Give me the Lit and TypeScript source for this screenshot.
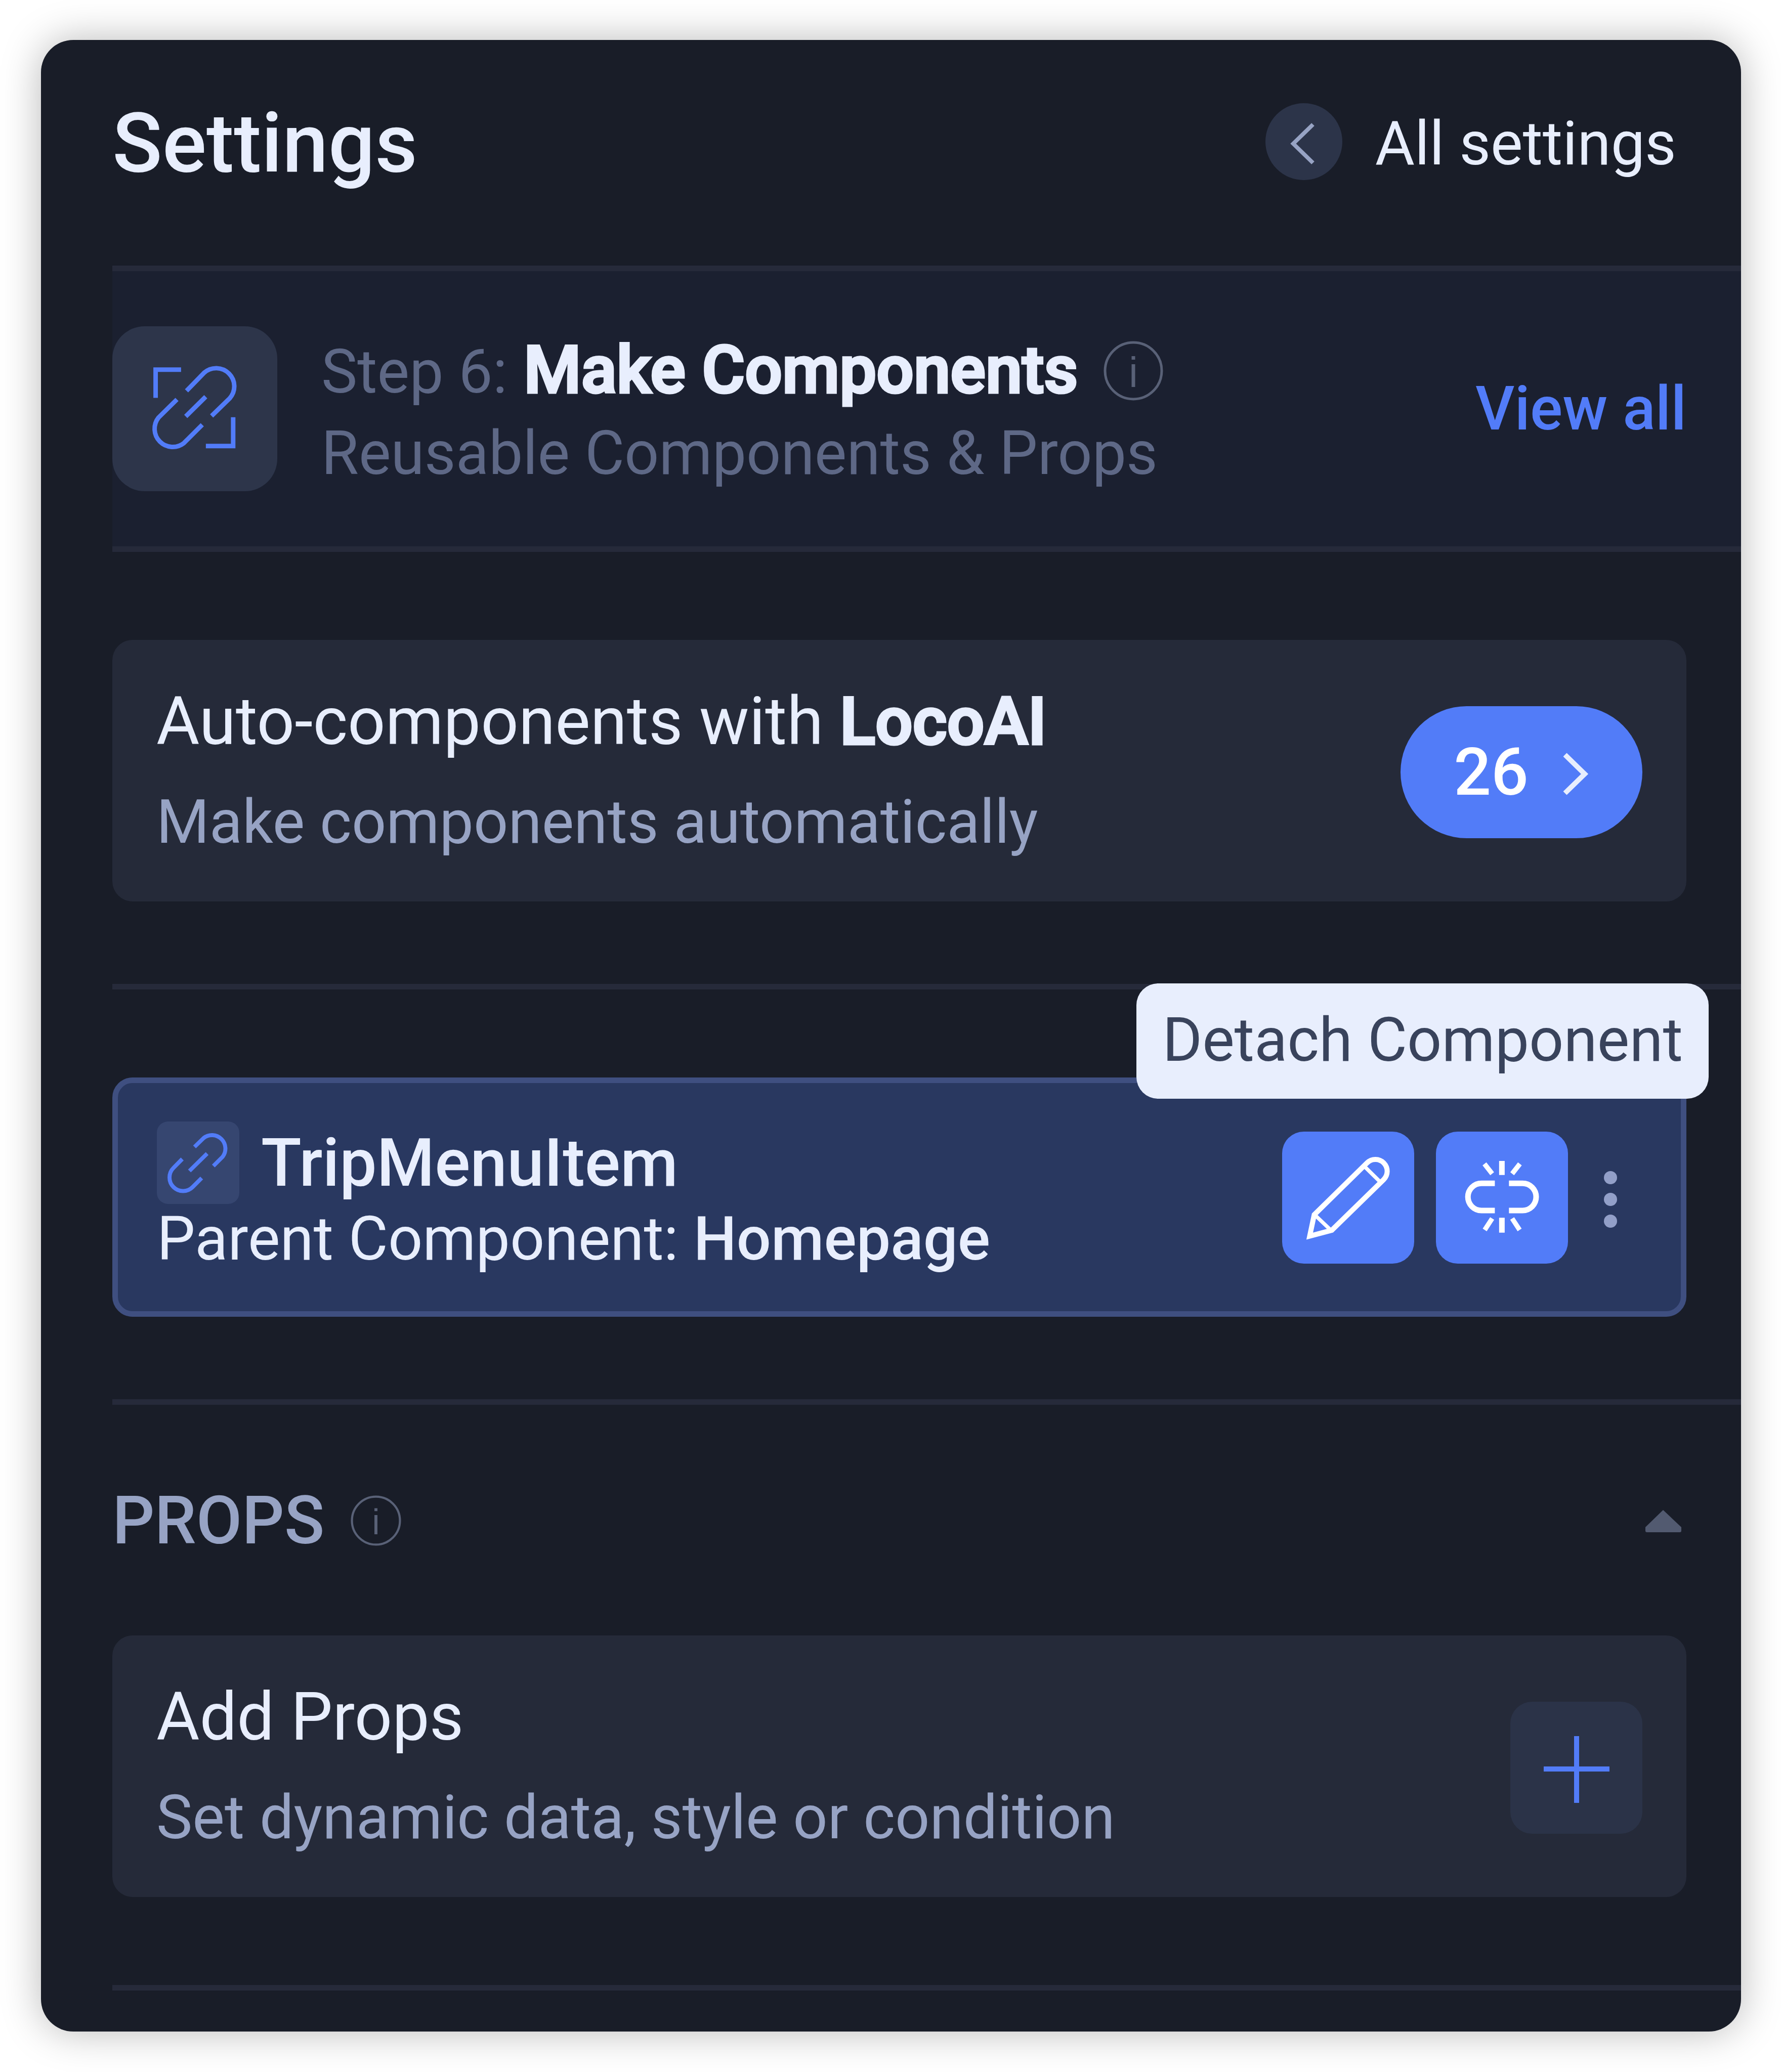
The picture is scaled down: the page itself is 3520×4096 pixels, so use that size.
import { LitElement, html, svg, css } from "lit";
import { customElement, state } from "lit/decorators.js";

const linkIcon = html`<svg class="glyph" viewBox="63 69 620 620" stroke-width="30" aria-hidden="true">
  <path d="M346 260 L414 194 A101 101 0 0 1 556 336 L488 404" />
  <path d="M308 441 L441 310" />
  <path d="M254 351 L188 418 A101 101 0 0 0 332 562 L400 494" />
</svg>`;

const makeIcon = html`<svg class="glyph" viewBox="63 105 1238 1238" stroke-width="34" aria-hidden="true">
  <path d="M579 431 H388 V642" />
  <path d="M970 788 V1004 H765" />
  <path d="M620 590 L752 454 A136 136 0 0 1 944 646 L808 778" />
  <path d="M614 782 L764 634" />
  <path d="M548 654 L410 790 A136 136 0 0 0 600 982 L738 844" />
</svg>`;

const backIcon = html`<svg class="glyph" viewBox="0 0 152 152" stroke-width="8" aria-hidden="true">
  <path d="M94 42 L55 80 L94 118" />
</svg>`;

const forwardIcon = html`<svg class="forward" viewBox="0 0 54 94" stroke-width="10" aria-hidden="true">
  <path d="M6 13 L45 51 L6 89" />
</svg>`;

const pencilIcon = html`<svg class="glyph" viewBox="12 92 991 991" stroke-width="38" aria-hidden="true">
  <path d="M219 876 L253 716 L650 326 A88 88 0 0 1 774 452 L385 832 Z" />
  <path d="M628 352 L742 464 M262 722 L378 832" stroke-width="28" />
</svg>`;

const rays = [
  [422, 334, 480, 408],
  [688, 334, 630, 408],
  [480, 744, 424, 830],
  [630, 744, 686, 830],
];

const detachIcon = html`<svg class="glyph" viewBox="58 92 991 991" stroke-width="42" aria-hidden="true">
  <path d="M500 480 H400 A102 102 0 0 0 400 684 H500" />
  <path d="M606 480 H708 A102 102 0 0 1 708 684 H606" />
  <path d="M553 312 V418 M553 738 V850" stroke-width="42" />
  ${rays.map(([x1, y1, x2, y2]) => svg`<line x1=${x1} y1=${y1} x2=${x2} y2=${y2} stroke-width="36" />`)}
</svg>`;

const dotsIcon = html`<svg class="dots" viewBox="0 0 124 261" aria-hidden="true">
  ${[91, 134, 177].map((y) => svg`<circle cx="62" cy=${y} r="13" />`)}
</svg>`;

const plusIcon = html`<svg class="glyph" viewBox="0 0 261 261" stroke-width="10" aria-hidden="true">
  <path d="M66 133 H196 M131 68 V200" />
</svg>`;

const infoIcon = html`<svg class="glyph" viewBox="0 0 118 118" stroke-width="5" aria-hidden="true">
  <circle cx="59" cy="59" r="56" />
  <path d="M59 30 V37 M59 46 V91" stroke-width="7" />
</svg>`;

@customElement("app-root")
export class AppRoot extends LitElement {
  @state() private propsOpen = true;

  static styles = css`
    :host {
      display: block;
      box-sizing: border-box;
      min-height: 100vh;
      padding: 79px 79px 79px 81px;
      background: #ffffff;
      color: #e8eefd;
      font-family: Roboto, "Liberation Sans", sans-serif;
      font-size: 120px;
    }
    * {
      box-sizing: border-box;
    }
    h1, h2, h3, p {
      margin: 0;
      font-weight: 400;
    }
    button {
      margin: 0;
      padding: 0;
      border: 0;
      background: none;
      color: inherit;
      font: inherit;
      cursor: pointer;
    }
    a {
      color: inherit;
      text-decoration: none;
    }
    svg {
      display: block;
      fill: none;
      stroke: currentColor;
    }
    .glyph {
      width: 100%;
      height: 100%;
    }
    .panel {
      padding: 0 0 81px 141px;
      border-radius: 64px;
      background: #191d28;
      box-shadow: 0 0 80px rgba(0, 0, 0, 0.28);
    }
    .header {
      display: flex;
      align-items: flex-start;
      justify-content: space-between;
      padding: 125px 128px 161px 0;
      line-height: 160px;
    }
    .title {
      font-size: 163px;
      font-weight: 500;
    }
    .back {
      display: flex;
      align-items: flex-start;
      gap: 65px;
    }
    .back-circle {
      width: 152px;
      height: 152px;
      border-radius: 50%;
      background: #2c3449;
      color: #97a3c4;
    }
    .step {
      display: flex;
      align-items: flex-start;
      gap: 87px;
      padding: 109px 108px 109px 0;
      border-top: 11px solid #262a3a;
      border-bottom: 11px solid #262a3a;
      background: #1b2030;
    }
    .step-tile {
      flex: none;
      width: 326px;
      height: 326px;
      border-radius: 64px;
      background: #2d354a;
      color: #527cf8;
    }
    .step-text {
      flex: 1;
      color: #5e6886;
      line-height: 150px;
    }
    .step-line {
      display: flex;
      align-items: center;
      gap: 50px;
      height: 176px;
    }
    .step-heading {
      font-size: 130px;
    }
    .step-number {
      font-size: 120px;
    }
    .strong {
      color: #e8eefd;
      font-size: 130px;
      font-weight: 500;
      -webkit-text-stroke: 5px #e8eefd;
    }
    .info {
      width: 118px;
      height: 118px;
      color: #596177;
    }
    .info.small {
      width: 100px;
      height: 100px;
    }
    .view-all {
      align-self: center;
      color: #527cf8;
      font-weight: 500;
      line-height: 150px;
    }
    .section {
      padding: 174px 108px 163px 0;
      border-bottom: 11px solid #262a3a;
    }
    .card {
      display: flex;
      align-items: center;
      justify-content: space-between;
      padding: 87px 87px 82px;
      border-radius: 40px;
      background: #252a39;
    }
    .card-text {
      display: flex;
      flex-direction: column;
      gap: 50px;
      line-height: 149px;
    }
    .card-title {
      font-size: 131px;
    }
    .card-sub {
      color: #97a3c4;
    }
    .pill {
      display: flex;
      align-items: center;
      gap: 66px;
      height: 261px;
      padding: 0 105px;
      border-radius: 131px;
      background: #527cf8;
      color: #ffffff;
      font-size: 130px;
      font-weight: 500;
    }
    .forward {
      width: 54px;
      height: 94px;
      color: #e8eefd;
    }
    .square {
      width: 261px;
      height: 261px;
      border-radius: 43px;
      background: #527cf8;
      color: #ffffff;
    }
    .square.quiet {
      background: #2b3348;
      color: #527cf8;
    }
    .selected {
      position: relative;
      padding: 76px 77px 74px;
      border: 11px solid #3f4f80;
      background: #293860;
    }
    .name-line {
      display: flex;
      align-items: center;
      gap: 43px;
    }
    .name-tile {
      width: 163px;
      height: 163px;
      border-radius: 22px;
      background: #364670;
      color: #527cf8;
    }
    .name {
      font-size: 131px;
      font-weight: 500;
    }
    .parent {
      line-height: 138px;
    }
    .parent-link {
      font-weight: 500;
    }
    .actions {
      display: flex;
      align-items: center;
      gap: 22px;
    }
    .action-pair {
      display: flex;
      gap: 43px;
    }
    .dots {
      width: 124px;
      height: 261px;
      fill: #929fc8;
      stroke: none;
    }
    .tooltip {
      position: absolute;
      top: -197px;
      right: -55px;
      padding: 36px 51px 40px;
      border-radius: 43px;
      background: #e8eefd;
      color: #39435c;
      line-height: 152px;
      white-space: nowrap;
    }
    .props {
      padding: 152px 108px 174px 0;
      border-bottom: 11px solid #262a3a;
    }
    .props-head {
      display: flex;
      align-items: center;
      justify-content: space-between;
      margin-bottom: 150px;
      line-height: 154px;
    }
    .props-label {
      display: flex;
      align-items: center;
      gap: 52px;
    }
    .props-title {
      color: #97a3c4;
      font-size: 131px;
      font-weight: 500;
    }
    .collapse {
      width: 91px;
      height: 91px;
    }
    .triangle {
      width: 91px;
      height: 91px;
      fill: #525a70;
      stroke: none;
    }
  `;

  render() {
    return html`
      <main class="panel">
        <header class="header">
          <h1 class="title">Settings</h1>
          <a class="back" href="#all">
            <span class="back-circle">${backIcon}</span>
            <span>All settings</span>
          </a>
        </header>

        <section class="step">
          <div class="step-tile">${makeIcon}</div>
          <div class="step-text">
            <div class="step-line">
              <h2 class="step-heading">
                <span class="step-number">Step 6:</span>
                <span class="strong">Make Components</span>
              </h2>
              <button class="info" aria-label="About components">${infoIcon}</button>
            </div>
            <p>Reusable Components &amp; Props</p>
          </div>
          <a class="view-all" href="#view-all">View all</a>
        </section>

        <section class="section">
          <div class="card">
            <div class="card-text">
              <h3 class="card-title">Auto-components with <span class="strong">LocoAI</span></h3>
              <p class="card-sub">Make components automatically</p>
            </div>
            <button class="pill"><span>26</span>${forwardIcon}</button>
          </div>
        </section>

        <section class="section">
          <div class="card selected">
            <div>
              <div class="name-line">
                <span class="name-tile">${linkIcon}</span>
                <h3 class="name">TripMenuItem</h3>
              </div>
              <p class="parent">Parent Component: <a class="parent-link" href="#homepage">Homepage</a></p>
            </div>
            <div class="actions">
              <div class="action-pair">
                <button class="square" aria-label="Edit component">${pencilIcon}</button>
                <button class="square" aria-labelledby="detach-tip">${detachIcon}</button>
              </div>
              <button aria-label="More actions">${dotsIcon}</button>
            </div>
            <div class="tooltip" id="detach-tip" role="tooltip">Detach Component</div>
          </div>
        </section>

        <section class="props">
          <div class="props-head">
            <div class="props-label">
              <h2 class="props-title">PROPS</h2>
              <button class="info small" aria-label="About props">${infoIcon}</button>
            </div>
            <button
              class="collapse"
              aria-label="Toggle props"
              aria-expanded=${this.propsOpen ? "true" : "false"}
              @click=${() => (this.propsOpen = !this.propsOpen)}
            >
              <svg class="triangle" viewBox="0 0 91 91" aria-hidden="true">
                <path d="M45 24 L81 58 V65 Q81 68 78 68 H13 Q10 68 10 65 V58 Z" />
              </svg>
            </button>
          </div>
          ${this.propsOpen
            ? html`<div class="card">
                <div class="card-text">
                  <h3 class="card-title">Add Props</h3>
                  <p class="card-sub">Set dynamic data, style or condition</p>
                </div>
                <button class="square quiet" aria-label="Add props">${plusIcon}</button>
              </div>`
            : null}
        </section>
      </main>
    `;
  }
}
